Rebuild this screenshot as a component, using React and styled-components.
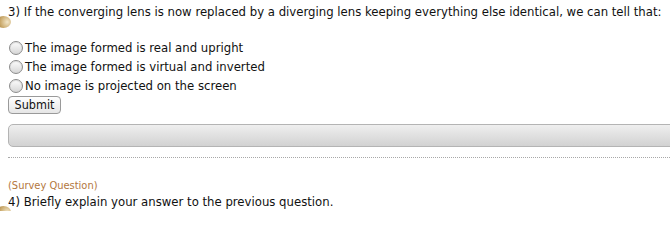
import React from 'react';
import styled, { createGlobalStyle } from 'styled-components';

const GlobalStyle = createGlobalStyle`
  html, body {
    margin: 0;
    padding: 0;
    background: #fff;
    overflow: hidden;
  }
  body {
    font-family: "DejaVu Sans Condensed", "DejaVu Sans", Tahoma, sans-serif;
    color: #111;
  }
`;

const choices = [
  'The image formed is real and upright',
  'The image formed is virtual and inverted',
  'No image is projected on the screen',
];

export default function App() {
  return (
    <>
      <GlobalStyle />
      <Page>
        <Question>
          <QuestionText>
            3) If the converging lens is now replaced by a diverging lens keeping everything else identical, we can tell that:
          </QuestionText>
          <Choices>
            {choices.map((c) => (
              <Choice key={c}>
                <Radio />
                <span>{c}</span>
              </Choice>
            ))}
          </Choices>
          <SubmitButton>Submit</SubmitButton>
        </Question>
        <ProgressBar />
        <Divider />
        <Question $survey>
          <SurveyLabel>(Survey Question)</SurveyLabel>
          <QuestionText>4) Briefly explain your answer to the previous question.</QuestionText>
        </Question>
      </Page>
    </>
  );
}

const Page = styled.div`
  padding: 3px 0 0 8px;
  width: 670px;
  box-sizing: border-box;
`;

const Question = styled.div`
  position: relative;
  padding-top: ${(p) => (p.$survey ? '21px' : '0')};
  &::before {
    content: '';
    position: absolute;
    left: -12px;
    top: ${(p) => (p.$survey ? '48px' : '13px')};
    width: 15px;
    height: 12px;
    border-radius: 50%;
    background: radial-gradient(circle at 75% 50%, #f2e6c8 0%, #c9a86a 55%, #8f6a2e 100%);
  }
`;

const QuestionText = styled.div`
  font-size: 13px;
  line-height: 18px;
  white-space: nowrap;
`;

const Choices = styled.div`
  margin-top: 17px;
  display: flex;
  flex-direction: column;
`;

const Choice = styled.label`
  display: flex;
  align-items: center;
  height: 19px;
  font-size: 13px;
`;

const Radio = styled.span`
  width: 12px;
  height: 12px;
  margin: 0 2px 0 1px;
  border-radius: 50%;
  border: 1px solid #8c8c8c;
  background: linear-gradient(#fdfdfd, #d6d6d6);
  box-shadow: inset 0 1px 1px rgba(0, 0, 0, 0.12);
  flex-shrink: 0;
`;

const SubmitButton = styled.button`
  display: block;
  margin-top: 1px;
  height: 18px;
  width: 53px;
  padding: 0;
  font-family: inherit;
  font-size: 12.5px;
  line-height: 16px;
  color: #111;
  border: 1px solid #9a9a9a;
  border-radius: 4px;
  background: linear-gradient(#ffffff, #e6e6e6);
`;

const ProgressBar = styled.div`
  margin-top: 10px;
  height: 21px;
  width: calc(100% + 20px);
  border: 1px solid #b4b4b4;
  border-radius: 5px;
  background: linear-gradient(#efefef, #d2d2d2);
`;

const Divider = styled.div`
  margin-top: 10px;
  border-top: 1px dotted #a8a8a8;
`;

const SurveyLabel = styled.div`
  font-size: 11px;
  line-height: 14px;
  color: #b3773d;
`;
